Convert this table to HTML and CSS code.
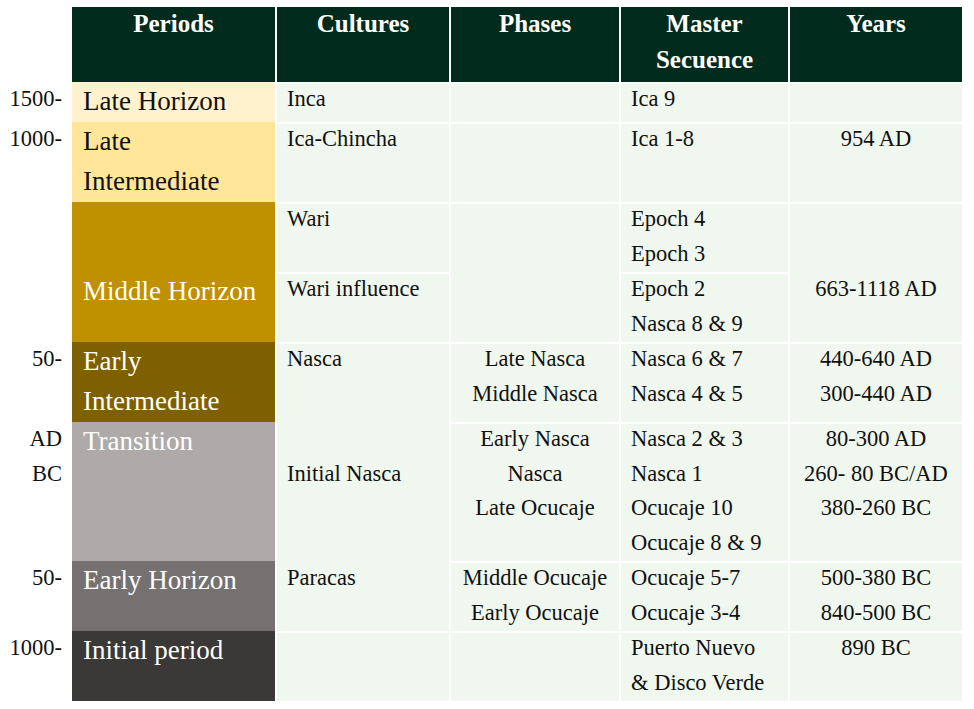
FILE: index.html
```html
<!DOCTYPE html>
<html lang="en">
<head>
<meta charset="utf-8">
<title>Nasca chronology</title>
<link rel="stylesheet" href="styles.css">
</head>
<body>
<div class="chrono">
  <div class="lbl"></div>
  <div class="head"><p>Periods</p></div>
  <div class="head"><p>Cultures</p></div>
  <div class="head"><p>Phases</p></div>
  <div class="head"><p>Master<br>Secuence</p></div>
  <div class="head"><p>Years</p></div>

  <div class="lbl"><p>1500-</p></div>
  <div class="period late-hor"><p>Late Horizon</p></div>
  <div class="cell"><p>Inca</p></div>
  <div class="cell mid"></div>
  <div class="cell"><p>Ica 9</p></div>
  <div class="cell mid"></div>

  <div class="lbl"><p>1000-</p></div>
  <div class="period late-int"><p>Late<br>Intermediate</p></div>
  <div class="cell"><p>Ica-Chincha</p></div>
  <div class="cell mid"></div>
  <div class="cell"><p>Ica 1-8</p></div>
  <div class="cell mid"><p>954 AD</p></div>

  <div class="lbl"></div>
  <div class="period mid-hor"></div>
  <div class="cell"><p>Wari</p></div>
  <div class="cell mid"></div>
  <div class="cell"><p>Epoch 4<br>Epoch 3</p></div>
  <div class="cell mid"></div>

  <div class="lbl"></div>
  <div class="period mid-hor light"><p>Middle Horizon</p></div>
  <div class="cell"><p>Wari influence</p></div>
  <div class="cell mid cont"></div>
  <div class="cell"><p>Epoch 2<br>Nasca 8 &amp; 9</p></div>
  <div class="cell mid cont"><p>663-1118 AD</p></div>

  <div class="lbl"><p>50-</p></div>
  <div class="period early-int light"><p>Early<br>Intermediate</p></div>
  <div class="cell"><p>Nasca</p></div>
  <div class="cell mid"><p>Late Nasca<br>Middle Nasca</p></div>
  <div class="cell"><p>Nasca 6 &amp; 7<br>Nasca 4 &amp; 5</p></div>
  <div class="cell mid"><p>440-640 AD<br>300-440 AD</p></div>

  <div class="lbl"><p>AD<br>BC</p></div>
  <div class="period transition light"><p>Transition</p></div>
  <div class="cell cont"><p class="second">Initial Nasca</p></div>
  <div class="cell mid"><p>Early Nasca<br>Nasca<br>Late Ocucaje</p></div>
  <div class="cell"><p>Nasca 2 &amp; 3<br>Nasca 1<br>Ocucaje 10<br>Ocucaje 8 &amp; 9</p></div>
  <div class="cell mid"><p>80-300 AD<br>260- 80 BC/AD<br>380-260 BC</p></div>

  <div class="lbl"><p>50-</p></div>
  <div class="period early-hor light"><p>Early Horizon</p></div>
  <div class="cell cont"><p>Paracas</p></div>
  <div class="cell mid"><p>Middle Ocucaje<br>Early Ocucaje</p></div>
  <div class="cell"><p>Ocucaje 5-7<br>Ocucaje 3-4</p></div>
  <div class="cell mid"><p>500-380 BC<br>840-500 BC</p></div>

  <div class="lbl"><p>1000-</p></div>
  <div class="period initial light"><p>Initial period</p></div>
  <div class="cell"></div>
  <div class="cell mid"></div>
  <div class="cell"><p>Puerto Nuevo<br>&amp; Disco Verde</p></div>
  <div class="cell mid"><p>890 BC</p></div>
</div>
</body>
</html>
```

FILE: styles.css
```css
* {
  box-sizing: border-box;
}

html, body {
  margin: 0;
  padding: 0;
  background: #ffffff;
}

body {
  font-family: "Liberation Serif", "Times New Roman", serif;
  color: #111111;
}

.chrono {
  display: grid;
  grid-template-columns: 70px 203px 172px 168px 167px 172px;
  grid-template-rows: 75px 40px 80px 70px 70px 80px 139px 70px 70px;
  column-gap: 2px;
  padding-top: 7px;
}

.chrono p {
  margin: 0;
}

.head {
  background: #012b1c;
  color: #ffffff;
  text-align: center;
}

.head p {
  font-weight: bold;
  font-size: 25px;
  line-height: 36px;
  margin-top: -1px;
}

.lbl {
  text-align: right;
  padding: 2px 8px 0 0;
}

.lbl p,
.cell p {
  font-size: 22.5px;
  line-height: 34.5px;
  margin-top: -2px;
}

.cell {
  background: #f0f7ee;
  border-top: 2px solid #ffffff;
  padding: 0 10px;
}

.cell.cont {
  border-top: none;
  padding-top: 2px;
}

.cell.mid {
  text-align: center;
}

.cell p.second {
  padding-top: 34.5px;
}

.period {
  padding: 0 11px;
}

.period p {
  font-size: 27px;
  line-height: 40px;
  margin-top: -1px;
}

.period.light {
  color: #ffffff;
}

.late-hor { background: #fff2cc; }
.late-int { background: #ffe699; }
.mid-hor { background: #bf9000; }
.early-int { background: #7f6000; }
.transition { background: #aeaaaa; }
.early-hor { background: #757171; }
.initial { background: #3b3838; }
```
